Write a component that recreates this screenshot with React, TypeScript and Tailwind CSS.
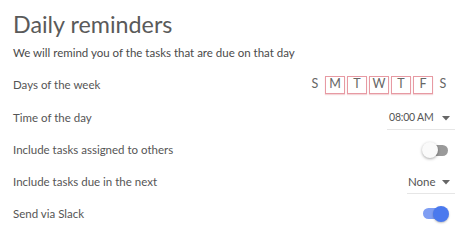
import React from "react";

function Caret() {
  return (
    <svg width="8" height="5" viewBox="0 0 8 5" className="shrink-0">
      <path d="M0 0 L8 0 L4 4.5 Z" fill="#666" />
    </svg>
  );
}

function Toggle({ on }: { on: boolean }) {
  if (on) {
    return (
      <div className="relative w-[26px] h-[16px] flex items-center">
        <div className="w-[24px] h-[11px] rounded-full bg-[#7f9ef3]" />
        <div className="absolute right-0 top-0 w-[16px] h-[16px] rounded-full bg-[#4a79ee] shadow-[0_1px_2px_rgba(0,0,0,0.25)]" />
      </div>
    );
  }
  return (
    <div className="relative w-[26px] h-[16px] flex items-center justify-end">
      <div className="w-[24px] h-[11px] rounded-full bg-[#9a9a9a]" />
      <div className="absolute left-0 top-0 w-[16px] h-[16px] rounded-full bg-[#fafafa] shadow-[0_1px_3px_rgba(0,0,0,0.35)]" />
    </div>
  );
}

export default function App() {
  const days = ["S", "M", "T", "W", "T", "F", "S"];
  const active = [false, true, true, true, true, true, false];
  return (
    <div
      className="w-[474px] h-[239px] bg-white text-[#555] pl-[13px] pr-[19px] pt-[9px]"
      style={{ fontFamily: "Lato, 'Open Sans', sans-serif" }}
    >
      <div className="text-[23.3px] leading-[30px] text-[#5a5a5a]">Daily reminders</div>
      <div className="text-[11.5px] leading-[16px] mt-[6px] text-[#4a4a4a]">
        We will remind you of the tasks that are due on that day
      </div>
      <div className="mt-[7px] flex flex-col">
        <div className="h-[33px] flex items-center justify-between">
          <span className="text-[11.5px]">Days of the week</span>
          <div className="flex items-center gap-[2px] mr-[4px]">
            {days.map((d, i) =>
              active[i] ? (
                <div
                  key={i}
                  className="w-[20px] h-[18px] border border-[#e79aa3] flex items-center justify-center text-[12.5px] text-[#666] shadow-[0_1px_1px_rgba(220,120,130,0.3)]"
                >
                  {d}
                </div>
              ) : (
                <div key={i} className="w-[16px] h-[18px] flex items-center justify-center text-[12.5px] text-[#666]">
                  {d}
                </div>
              )
            )}
          </div>
        </div>
        <div className="h-[33px] flex items-center justify-between">
          <span className="text-[11.5px]">Time of the day</span>
          <div className="flex items-center justify-between shrink-0 w-[68px] h-[22px] border-b border-[#e6e6e6] pl-[2px] pr-[5px] text-[10.5px] tracking-[-0.2px] text-[#555] mt-[2px] whitespace-nowrap">
            <span>08:00 AM</span>
            <Caret />
          </div>
        </div>
        <div className="h-[32px] flex items-center justify-between">
          <span className="text-[11.5px]">Include tasks assigned to others</span>
          <div className="mr-[7px]">
            <Toggle on={false} />
          </div>
        </div>
        <div className="h-[31px] flex items-center justify-between">
          <span className="text-[11.5px]">Include tasks due in the next</span>
          <div className="flex items-center justify-between w-[48px] h-[22px] border-b border-[#e6e6e6] pl-[1px] pr-[5px] text-[11.5px] text-[#555] mt-[2px] whitespace-nowrap">
            <span>None</span>
            <Caret />
          </div>
        </div>
        <div className="h-[33px] flex items-center justify-between">
          <span className="text-[11.5px]">Send via Slack</span>
          <div className="mr-[6px]">
            <Toggle on={true} />
          </div>
        </div>
      </div>
    </div>
  );
}
